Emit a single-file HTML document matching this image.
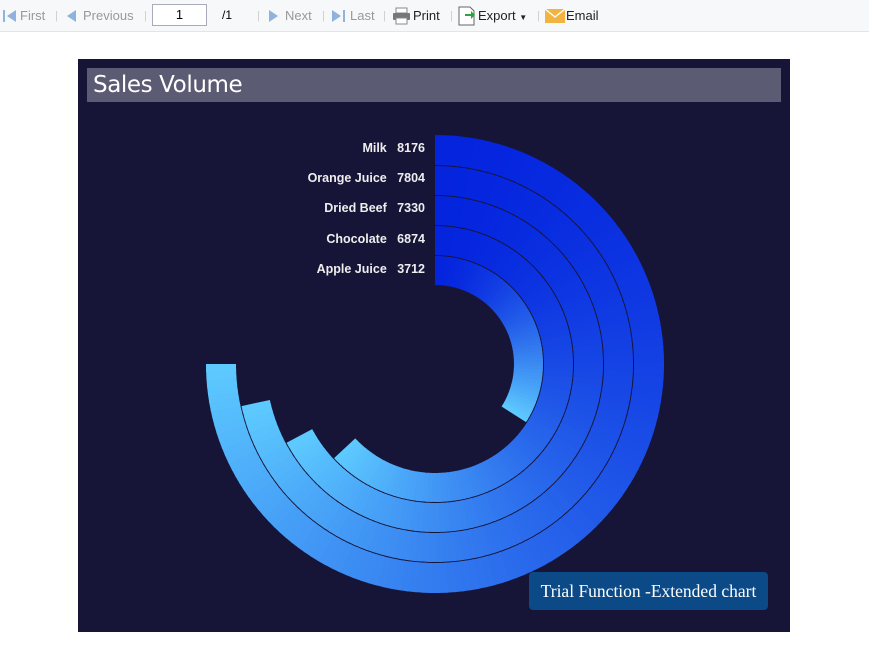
<!DOCTYPE html>
<html><head><meta charset="utf-8"><style>
*{margin:0;padding:0;box-sizing:border-box}
body{width:869px;height:656px;background:#fff;font-family:"Liberation Sans",Arial,sans-serif;position:relative;overflow:hidden}
.tb{position:absolute;left:0;top:0;width:869px;height:32px;background:#f7f8fa;border-bottom:1px solid #e3e5e8;font-size:13px;color:#999}
.tb span{position:absolute;top:8px;white-space:nowrap}
.sep{color:#ccc;font-size:11px;top:10px!important}
.pg{position:absolute;left:152px;top:4px;width:55px;height:22px;border:1px solid #aab;background:#fff;text-align:center;font-size:13px;line-height:20px;color:#000}
.panel{position:absolute;left:78px;top:59px;width:712px;height:573px;background:#171537}
.title{position:absolute;left:9px;top:9px;width:694px;height:34px;background:#5c5b74;color:#fff;font-size:23px;line-height:34px;padding-left:6px;font-family:"DejaVu Sans","Liberation Sans",sans-serif;letter-spacing:-0.4px}
.lab{position:absolute;right:444px;color:#eee;font-size:12.5px;font-weight:bold;white-space:nowrap;text-align:right}
.trial{position:absolute;left:451px;top:513px;width:239px;height:38px;background:#0c4a87;border-radius:4px;color:#fff;font-family:"Liberation Serif",serif;font-size:17.5px;line-height:38px;text-align:center}
</style></head><body>
<div class="tb">
<svg style="position:absolute;left:3px;top:9px" width="14" height="14"><rect x="0" y="1" width="2" height="12" fill="#8fb3dd"/><path d="M13 1v12L4 7z" fill="#8fb3dd"/></svg><span style="left:20px">First</span>
<span class="sep" style="left:55px">|</span>
<svg style="position:absolute;left:66px;top:9px" width="12" height="14"><path d="M10 1v12L1 7z" fill="#8fb3dd"/></svg><span style="left:83px">Previous</span>
<span class="sep" style="left:144px">|</span>
<div class="pg">1</div>
<span style="left:222px;color:#000;font-size:12px">/1</span>
<span class="sep" style="left:257px">|</span>
<svg style="position:absolute;left:268px;top:9px" width="12" height="14"><path d="M1 1v12L10 7z" fill="#8fb3dd"/></svg><span style="left:285px">Next</span>
<span class="sep" style="left:322px">|</span>
<svg style="position:absolute;left:332px;top:9px" width="14" height="14"><path d="M0 1v12L9 7z" fill="#8fb3dd"/><rect x="11" y="1" width="2" height="12" fill="#8fb3dd"/></svg><span style="left:350px">Last</span>
<span class="sep" style="left:383px">|</span>
<svg style="position:absolute;left:392px;top:7px" width="19" height="18"><rect x="4" y="1" width="11" height="5" fill="#fff" stroke="#888"/><rect x="1" y="6" width="17" height="7" rx="1" fill="#777"/><rect x="4" y="11" width="11" height="6" fill="#fff" stroke="#888"/></svg>
<span style="left:413px;color:#222">Print</span>
<span class="sep" style="left:450px">|</span>
<svg style="position:absolute;left:458px;top:6px" width="18" height="20"><path d="M1 1h11l4 4v14H1z" fill="#fff" stroke="#666"/><path d="M7 8h6v-3l4 4-4 4v-3H7z" fill="#2aa53b"/></svg>
<span style="left:478px;color:#222">Export <span style="position:static;font-size:8px">&#x25BC;</span></span>
<span class="sep" style="left:537px">|</span>
<svg style="position:absolute;left:545px;top:9px" width="20" height="14"><rect width="20" height="14" fill="#f3b340"/><path d="M0 0l10 8 10-8" fill="none" stroke="#fff" stroke-width="1.3"/></svg>
<span style="left:566px;color:#222">Email</span>
</div>
<div class="panel">
<div class="title">Sales Volume</div>
</div>
<svg style="position:absolute;left:0;top:0" width="869" height="656">
<g id="rings"></g>
</svg>
<div class="lab" style="top:141px">Milk&nbsp;&nbsp;&nbsp;8176</div>
<div class="lab" style="top:171px">Orange Juice&nbsp;&nbsp;&nbsp;7804</div>
<div class="lab" style="top:201px">Dried Beef&nbsp;&nbsp;&nbsp;7330</div>
<div class="lab" style="top:232px">Chocolate&nbsp;&nbsp;&nbsp;6874</div>
<div class="lab" style="top:262px">Apple Juice&nbsp;&nbsp;&nbsp;3712</div>
<div style="position:absolute;left:78px;top:59px;width:712px;height:573px;pointer-events:none"><div class="trial">Trial Function -Extended chart</div></div>
<script>
(function(){
var cx=435,cy=364,rings=[[199,229,8176],[169,198,7804],[139,168,7330],[109,138,6874],[79,108,3712]];
var g=document.getElementById('rings'),ns='http://www.w3.org/2000/svg';
function mix(t){var a=[4,36,222],b=[94,203,255];return 'rgb('+a.map(function(v,i){return Math.round(v+(b[i]-v)*t)}).join(',')+')';}
rings.forEach(function(r){
 var tot=r[2]/10901*360,N=Math.ceil(tot/2);
 for(var i=0;i<N;i++){
  var a0=tot*i/N,a1=Math.min(tot,tot*(i+1)/N+0.6);
  var t=(i+0.5)/N; t=Math.pow(t,1.6);
  function p(rad,a){var A=(a-90)*Math.PI/180;return (cx+rad*Math.cos(A)).toFixed(2)+' '+(cy+rad*Math.sin(A)).toFixed(2);}
  var d='M'+p(r[1],a0)+' A'+r[1]+' '+r[1]+' 0 0 1 '+p(r[1],a1)+' L'+p(r[0],a1)+' A'+r[0]+' '+r[0]+' 0 0 0 '+p(r[0],a0)+'Z';
  var e=document.createElementNS(ns,'path');e.setAttribute('d',d);e.setAttribute('fill',mix(t));g.appendChild(e);
 }
});
})();
</script>
</body></html>
